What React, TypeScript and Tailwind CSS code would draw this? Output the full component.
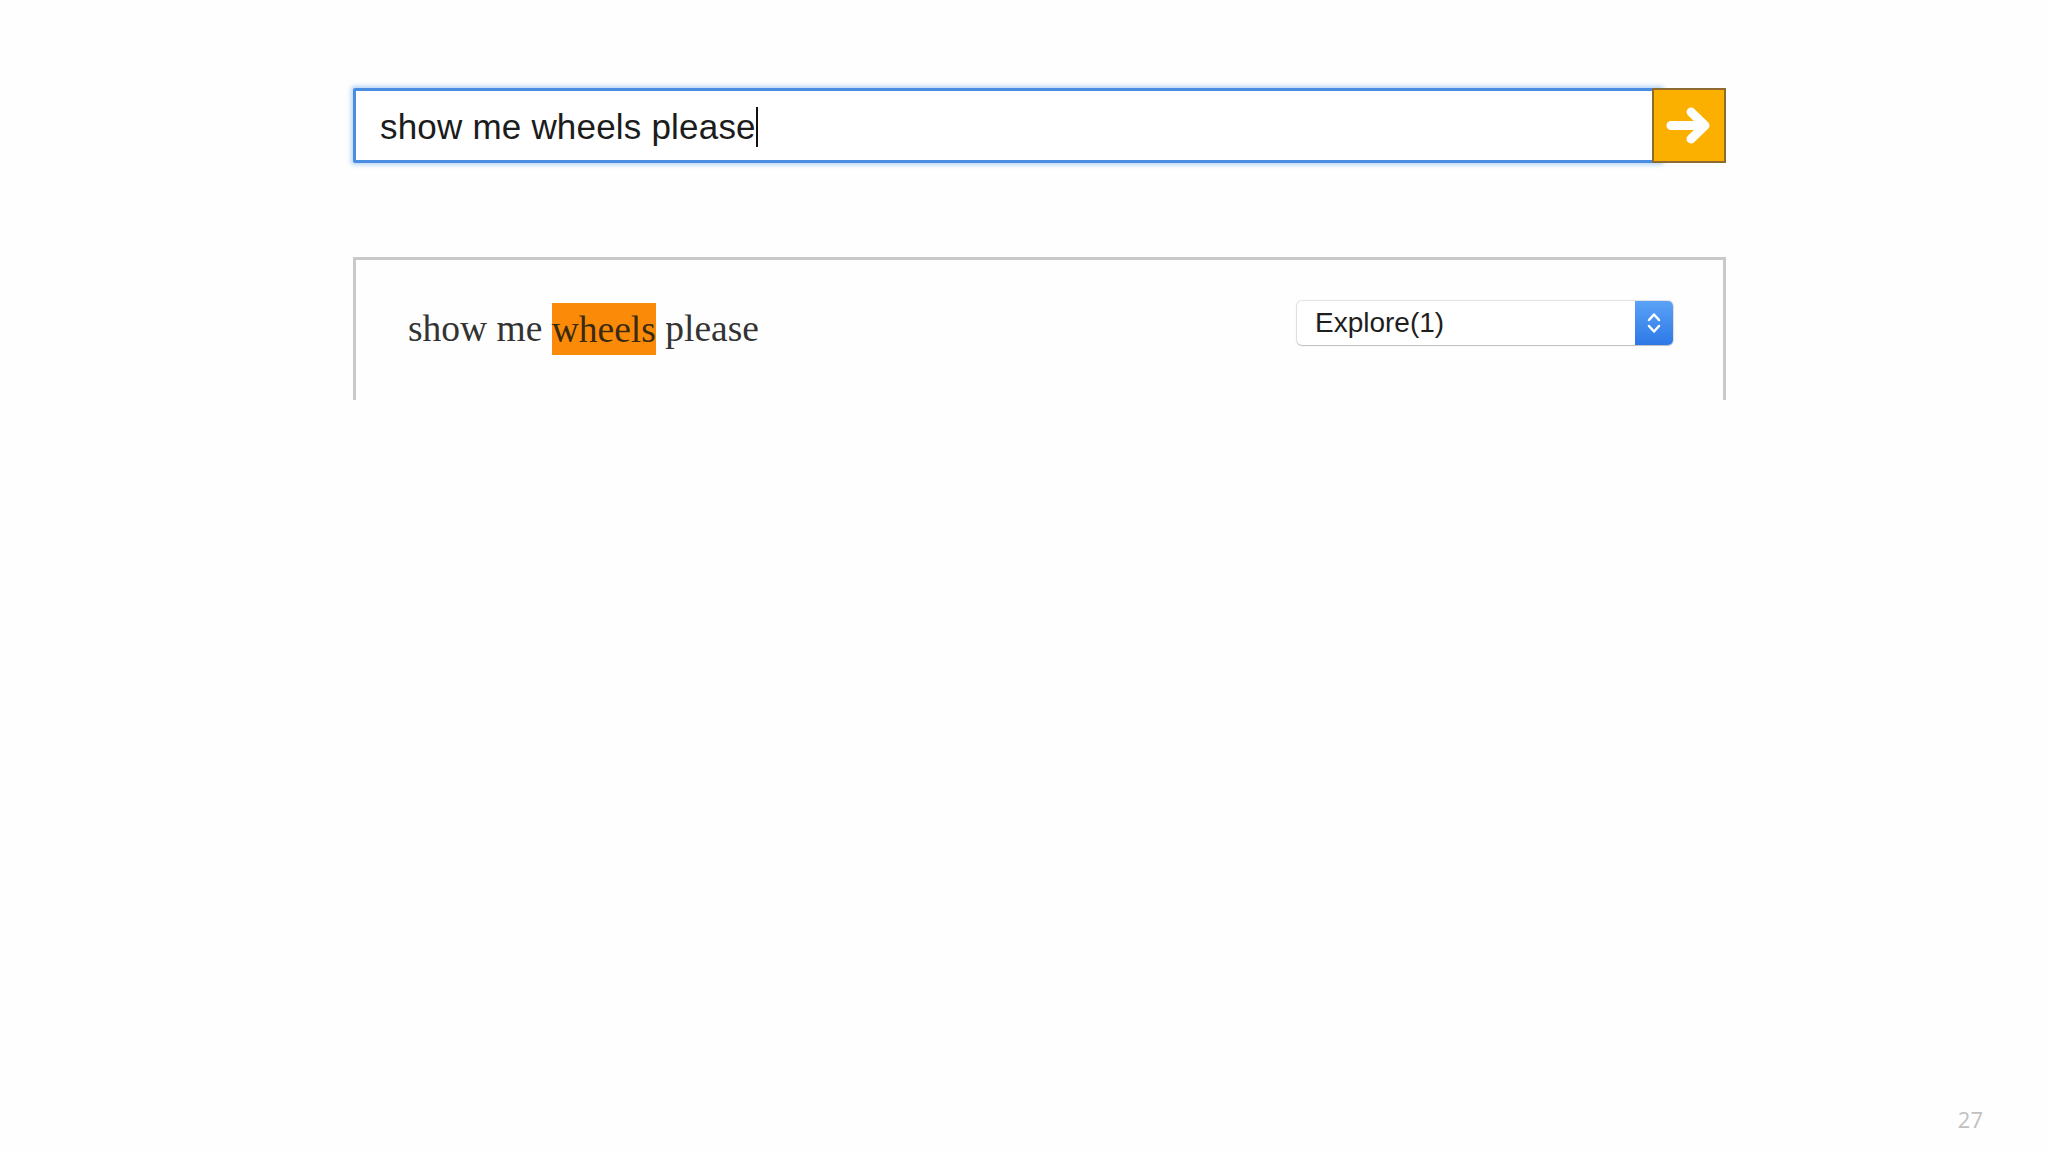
import React from "react";

export default function App() {
  return (
    <div className="w-[2048px] h-[1152px] bg-[#fefefe] flex flex-col overflow-hidden">
      <div className="ml-[353px] w-[1373px] pt-[88px] flex flex-col">
        {/* search row */}
        <div className="flex h-[75px]">
          <div className="flex-1 flex items-center border-[3px] border-[#4a8de0] rounded-[2px] shadow-[0_0_4px_2px_rgba(110,170,240,0.5)] bg-white pl-[24px] mr-[-10px]">
            <span
              className="mt-[3px] text-[35px] leading-[40px] tracking-[0.2px] text-[#1c1c1c]"
              style={{ fontFamily: '"Liberation Sans", Arial, sans-serif' }}
            >
              show me wheels please
            </span>
            <span className="mt-[3px] w-[2px] h-[40px] bg-[#111]" />
          </div>
          <button className="relative w-[74px] h-[75px] bg-[#fbb000] border-[2px] border-[#8d6b2e] flex items-center justify-center">
            <svg width="47" height="37" viewBox="0 0 47 37">
              <line x1="5" y1="18.5" x2="36" y2="18.5" stroke="white" strokeWidth="9" strokeLinecap="round" />
              <polyline
                points="25,5 39,18.5 25,32"
                fill="none"
                stroke="white"
                strokeWidth="9"
                strokeLinecap="round"
                strokeLinejoin="round"
              />
            </svg>
          </button>
        </div>

        {/* result box */}
        <div className="mt-[94px] h-[143px] border-[3px] border-b-0 border-[#c9c9c9] flex justify-between items-start pl-[52px] pr-[50px] pt-[41px]">
          <div
            className="mt-[1px] text-[37.5px] leading-[53px] text-[#333]"
            style={{ fontFamily: '"Liberation Serif", "Times New Roman", serif' }}
          >
            show me <span className="bg-[#fb8a08] text-[#3b2a12] py-[5.5px]">wheels</span> please
          </div>
          <div className="w-[376px] h-[44px] flex rounded-[5px] bg-white shadow-[0_0_1px_1px_rgba(0,0,0,0.12),0_1px_1px_rgba(0,0,0,0.15)]">
            <div
              className="flex-1 flex items-center pl-[18px] text-[28px] text-[#1e1e1e]"
              style={{ fontFamily: '"Liberation Sans", Arial, sans-serif' }}
            >
              Explore(1)
            </div>
            <div className="w-[38px] h-[44px] rounded-r-[5px] bg-gradient-to-b from-[#5aa2f6] to-[#2d78e6] flex items-center justify-center">
              <svg width="16" height="26" viewBox="0 0 16 26">
                <polyline points="3,10 8,4.5 13,10" fill="none" stroke="white" strokeWidth="2.5" strokeLinecap="round" strokeLinejoin="round" />
                <polyline points="3,16 8,21.5 13,16" fill="none" stroke="white" strokeWidth="2.5" strokeLinecap="round" strokeLinejoin="round" />
              </svg>
            </div>
          </div>
        </div>
      </div>

      <div className="mt-auto flex justify-end pr-[65px] pb-[22px]">
        <span
          className="text-[22px] leading-[22px] text-[#c0c0c0]"
          style={{ fontFamily: '"Open Sans", "Liberation Sans", sans-serif' }}
        >
          27
        </span>
      </div>
    </div>
  );
}
